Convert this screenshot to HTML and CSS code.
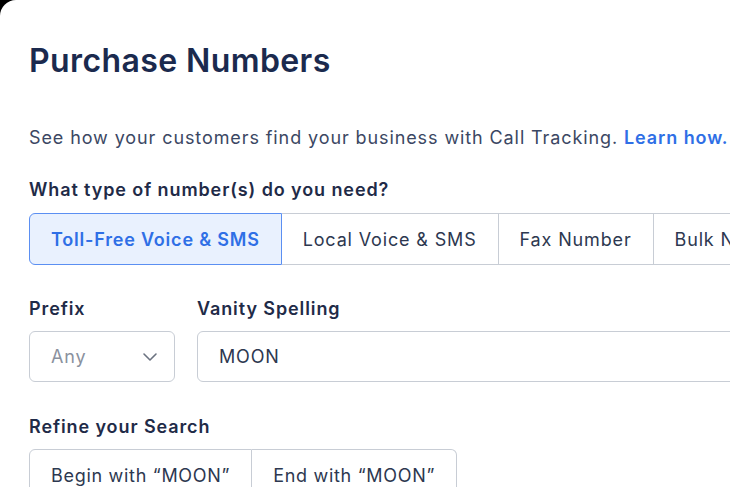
FILE: index.html
```html
<html>
	<head>
		<title>Purchase Numbers</title>
		<link rel="stylesheet" href="styles.css">
	</head>
	<body>
		<div id='modal'>
			<h1>Purchase Numbers</h1>
			<p class='intro'>See how your customers find your business with Call Tracking. <a href='#'>Learn how.</a></p>

			<div class='label'>What type of number(s) do you need?</div>
			<div class='segments'>
				<button class='seg active'>Toll-Free Voice &amp; SMS</button>
				<button class='seg'>Local Voice &amp; SMS</button>
				<button class='seg'>Fax Number</button>
				<button class='seg'>Bulk Numbers</button>
			</div>

			<div class='fields'>
				<div class='field prefix'>
					<div class='label'>Prefix</div>
					<div class='select'>
						<span class='placeholder'>Any</span>
						<svg width='16' height='10' viewBox='0 0 16 10'><path d='M2 2l6 6 6-6' fill='none' stroke='#6b7280' stroke-width='1.6' stroke-linecap='round' stroke-linejoin='round'/></svg>
					</div>
				</div>
				<div class='field vanity'>
					<div class='label'>Vanity Spelling</div>
					<div class='input'>MOON</div>
				</div>
			</div>

			<div class='label'>Refine your Search</div>
			<div class='segments refine'>
				<button class='seg'>Begin with “MOON”</button>
				<button class='seg'>End with “MOON”</button>
			</div>
		</div>
	</body>
</html>
```

FILE: styles.css
```css
html, body{
	margin:0;
	height:100%;
	background:#000;
	overflow:hidden;
}
#modal{
	background:#fff;
	border-top-left-radius:16px;
	width:900px;
	height:100%;
	padding:41px 0 0 29px;
	box-sizing:border-box;
	font-family:Inter, "Noto Sans", sans-serif;
	color:#1d2a4a;
}
#modal h1{
	margin:0;
	font-size:32px;
	line-height:40px;
	font-weight:600;
	color:#1b2a4e;
	letter-spacing:0.4px;
}
.intro{
	margin:44px 0 0;
	font-size:18px;
	line-height:26px;
	color:#3b4763;
	letter-spacing:0.9px;
}
.intro a{
	color:#2f6fe6;
	font-weight:600;
	text-decoration:none;
}
.label{
	font-size:18px;
	line-height:24px;
	font-weight:600;
	color:#1f2b48;
	letter-spacing:0.9px;
}
.intro + .label{
	margin-top:27px;
}
.segments{
	display:flex;
	margin-top:11px;
}
.seg{
	height:52px;
	padding:0 21px;
	border:1px solid #c8cdd5;
	border-left:none;
	background:#fff;
	font-family:inherit;
	font-size:18px;
	color:#2d3850;
	letter-spacing:0.85px;
	white-space:nowrap;
	flex-shrink:0;
}
.seg:first-child{
	border-left:1px solid #c8cdd5;
	border-radius:6px 0 0 6px;
}
.seg.active{
	background:#e9f1fe;
	border:1px solid #5b8ff2;
	color:#2f6fe6;
	font-weight:600;
	letter-spacing:0.8px;
}
.fields{
	display:flex;
	gap:22px;
	margin-top:32px;
}
.field .label{
	margin-bottom:10px;
}
.select, .input{
	height:51px;
	box-sizing:border-box;
	border:1px solid #c8cdd5;
	border-radius:6px;
	display:flex;
	align-items:center;
	padding:0 21px;
	font-size:18px;
	letter-spacing:0.85px;
}
.select{
	width:146px;
	justify-content:space-between;
	padding-right:16px;
}
.placeholder{
	color:#8a919e;
}
.input{
	width:600px;
	color:#2d3850;
}
.fields + .label{
	margin-top:33px;
}
.refine{
	margin-top:10px;
}
.refine .seg{
	letter-spacing:0.7px;
}
.refine .seg:last-child{
	border-radius:0 6px 0 0;
}
```
